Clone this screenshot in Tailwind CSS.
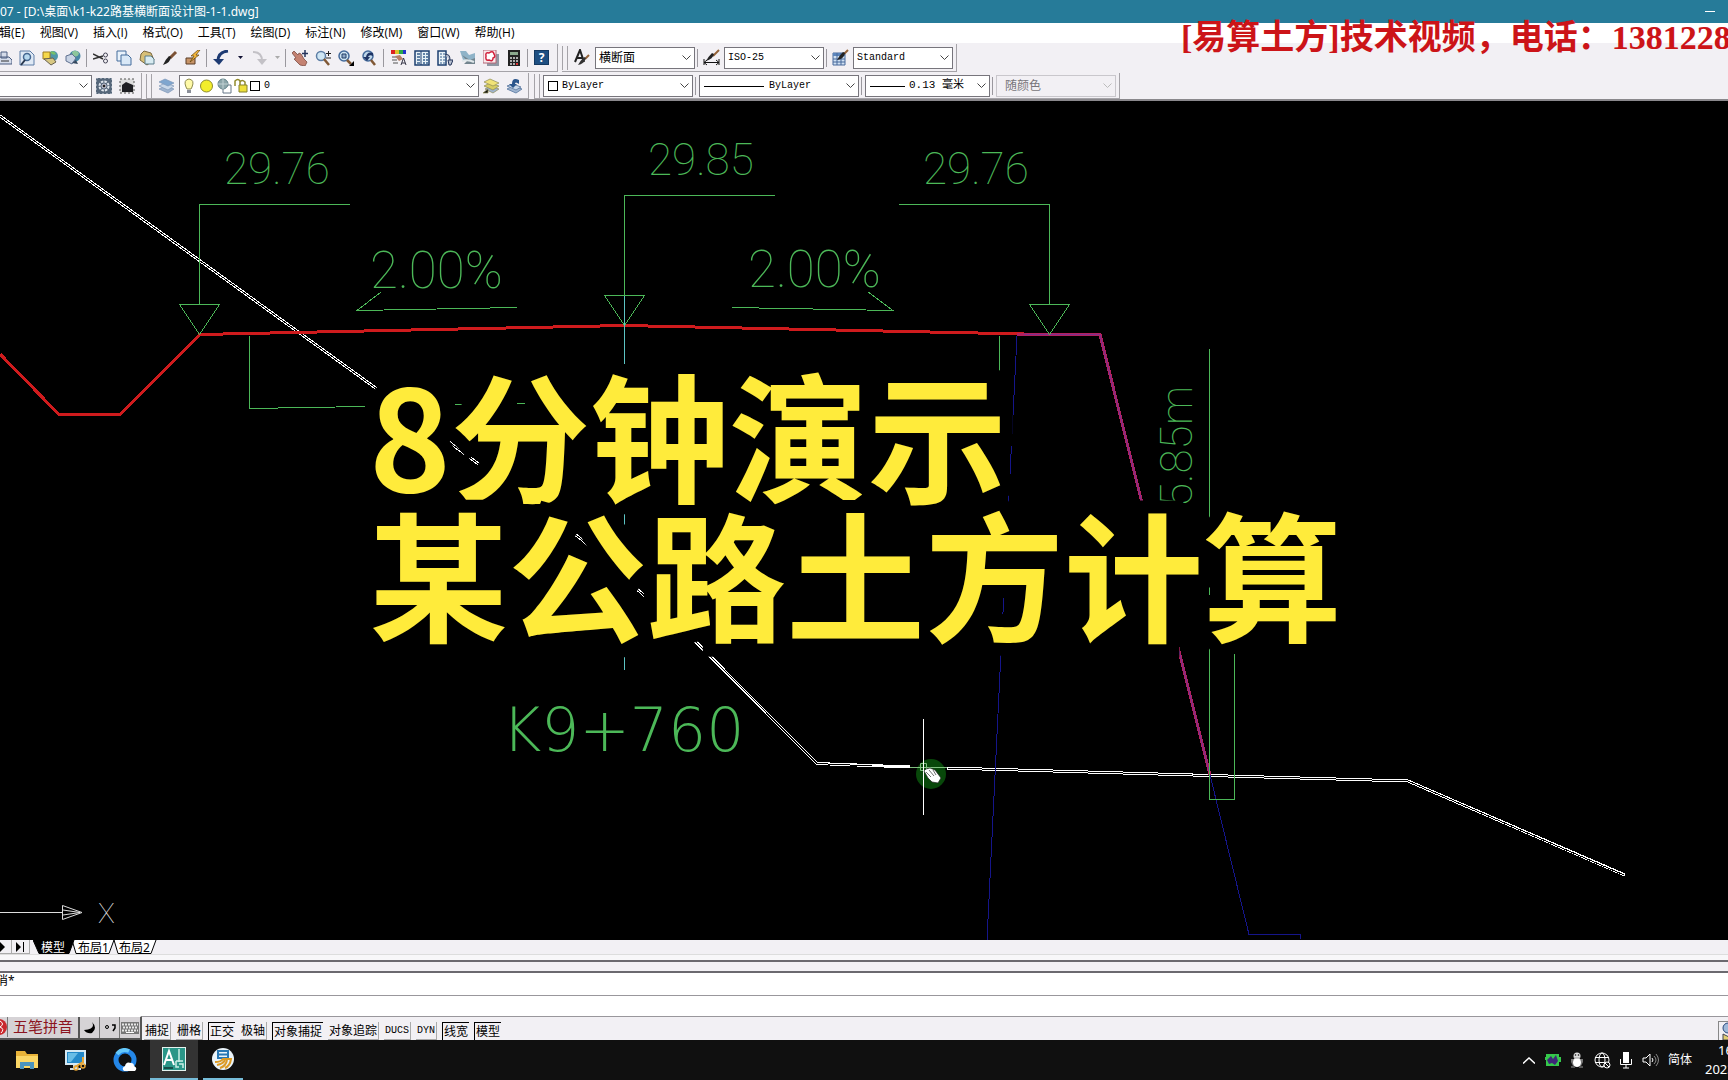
<!DOCTYPE html>
<html lang="zh-CN">
<head>
    <meta charset="UTF-8" />
    <meta name="viewport" content="width=device-width, initial-scale=1.0" />
    <title>k1-k22路基横断面设计图-1-1.dwg</title>
    <script src="https://cdn.jsdelivr.net/npm/@tailwindcss/browser@4"></script>
</head>
<body class="h-screen flex flex-col overflow-hidden bg-[#f2f0f4] text-xs text-black font-['Noto_Sans','Noto_Sans_CJK_SC',sans-serif]">
    <!-- Title bar -->
    <header class="h-[23px] shrink-0 flex items-center justify-between bg-[#267b99] text-white whitespace-nowrap">
        <span>07 - [D:\桌面\k1-k22路基横断面设计图-1-1.dwg]</span>
        <button aria-label="最小化" class="w-8 h-full flex items-center justify-center pr-1">
            <span class="w-[10px] h-px bg-white"></span>
        </button>
    </header>

    <!-- Menu -->
    <nav class="h-5 shrink-0 flex items-center gap-[15px] bg-white whitespace-nowrap font-['Open_Sans','Noto_Sans_CJK_SC',sans-serif]">
        <button class="-ml-px">辑(E)</button>
        <button>视图(V)</button>
        <button>插入(I)</button>
        <button>格式(O)</button>
        <button>工具(T)</button>
        <button>绘图(D)</button>
        <button>标注(N)</button>
        <button>修改(M)</button>
        <button>窗口(W)</button>
        <button>帮助(H)</button>
    </nav>

    <!-- Toolbar, first row -->
    <div class="h-[30px] shrink-0 flex items-center">
        <div class="h-[28px] flex items-center border-r border-b border-[#a5a3a8] pr-1 -ml-2">
            <button aria-label="打印" class="w-[23px] flex justify-center"><svg width="16" height="16"><path d="M3 7h10l3 3v4H3zM5 2h6v6H5z" fill="#d5dcea" stroke="#4a5c80"/><path d="M5 11h8" stroke="#333"/></svg></button>
            <button aria-label="打印预览" class="w-[23px] flex justify-center"><svg width="16" height="16"><path d="M1 1h10l4 4v10H1z" fill="#dfe9f5" stroke="#5d7ca6"/><circle cx="8" cy="7" r="3.500" fill="#b6d8ef" stroke="#436690" stroke-width="1.500"/><path d="M6 10l-4 5" stroke="#27364e" stroke-width="2"/></svg></button>
            <button aria-label="发布" class="w-[23px] flex justify-center"><svg width="16" height="16"><circle cx="11" cy="6" r="5" fill="#4f97a8"/><path d="M8 2q4-2 6 2-3 2-6-2" fill="#75c06a"/><path d="M1 2h7v7H1z" fill="#f6d84a" stroke="#9c7a22"/><path d="M2 9l9-1 3 4-5 3z" fill="#d8c882" stroke="#67604f"/></svg></button>
            <button aria-label="三维 DWF" class="w-[23px] flex justify-center"><svg width="16" height="16"><circle cx="10" cy="6" r="5.500" fill="#4687a5"/><path d="M7 2q4-3 7 1-1 5-6 3z" fill="#8cc69b"/><path d="M1 6l6-2 4 4-4 6-6-3z" fill="#c8d3e4" stroke="#607190"/><path d="M7 13l4-3 2 4z" fill="#33475f"/></svg></button>
            <span class="w-[5px] flex justify-center"><i class="w-px h-[18px] bg-[#9a989e]"></i></span>
            <button aria-label="剪切" class="w-[23px] flex justify-center"><svg width="16" height="16" fill="none"><path d="M0 4l10 5M0 9l10-3" stroke="#333" stroke-width="1.500"/><circle cx="12.500" cy="5" r="2" stroke="#445"/><circle cx="12.500" cy="11" r="2" stroke="#445"/></svg></button>
            <button aria-label="复制" class="w-[23px] flex justify-center"><svg width="16" height="16"><path d="M1 1h9v10H1z" fill="#e9f2fb" stroke="#446d9c"/><path d="M5 5h7l3 3v7H5z" fill="#d9e8f7" stroke="#446d9c"/></svg></button>
            <button aria-label="粘贴" class="w-[23px] flex justify-center"><svg width="16" height="16"><path d="M5 1l7 2 3 7-7 5-7-5 1-6z" fill="#d7bf77" stroke="#7a6840"/><path d="M6 6h6l3 3v5H6z" fill="#d8ebf1" stroke="#5b7d8b"/></svg></button>
            <button aria-label="特性匹配" class="w-[23px] flex justify-center"><svg width="16" height="16"><path d="M14 2L8 8" stroke="#7c5235" stroke-width="3"/><path d="M9 7q0 5-8 8 2-5 6-9z" fill="#222"/></svg></button>
            <button aria-label="块编辑器" class="w-[23px] flex justify-center"><svg width="16" height="16"><path d="M1 8h9v6H1z" fill="#c79468" stroke="#5b3d27"/><path d="M13 0L6 6h3l-4 6 9-7h-3l4-5z" fill="#f4b63a" stroke="#5d410c" stroke-width=".7"/></svg></button>
            <span class="w-[5px] flex justify-center"><i class="w-px h-[18px] bg-[#9a989e]"></i></span>
            <button aria-label="放弃" class="w-[23px] flex justify-center"><svg width="16" height="16"><path d="M15 1Q5 2 5 11" fill="none" stroke="#1d3a72" stroke-width="3"/><path d="M0 9h11l-5 6z" fill="#1d3a72"/></svg></button>
            <button aria-label="放弃列表" class="w-4 flex justify-center"><svg width="5" height="3"><path d="M0 0h5L2.500 3z" fill="#113"/></svg></button>
            <button aria-label="重做" class="w-[23px] flex justify-center"><svg width="16" height="16"><path d="M1 2Q10 2 10 11" fill="none" stroke="#c3c1c6" stroke-width="2"/><path d="M5 9h10l-5 6z" fill="#c3c1c6"/></svg></button>
            <button aria-label="重做列表" class="w-3 flex justify-center"><svg width="5" height="3"><path d="M0 0h5L2.500 3z" fill="#aaa"/></svg></button>
            <span class="w-[5px] flex justify-center"><i class="w-px h-[18px] bg-[#9a989e]"></i></span>
            <button aria-label="平移" class="w-[23px] flex justify-center"><svg width="16" height="16"><path d="M0 3l2-2 4 4 1-2 2 1 3 5 3 3-2 4-5-1-6-6 2-1z" fill="#c48272" stroke="#7e4c44" stroke-width=".8"/><path d="M13 0v7M10 3.500h6" stroke="#25345c" stroke-width="1.500"/></svg></button>
            <button aria-label="实时缩放" class="w-[23px] flex justify-center"><svg width="16" height="16"><circle cx="6" cy="6" r="4.500" fill="#cfe6f4" stroke="#5d7ea5" stroke-width="1.500"/><path d="M9 9l5 6" stroke="#805835" stroke-width="2.500"/><path d="M13.500 1v5M11 3.500h5M11 8h5" stroke="#222"/></svg></button>
            <button aria-label="窗口缩放" class="w-[23px] flex justify-center"><svg width="16" height="16"><circle cx="6" cy="6" r="5" fill="#cfe6f4" stroke="#446a9b" stroke-width="1.500"/><path d="M4 4h4v4H4z" fill="#8ba6c6" stroke="#223e68"/><path d="M9 10l4 4" stroke="#805835" stroke-width="2.500"/><path d="M16 11v5h-5z"/></svg></button>
            <button aria-label="缩放上一个" class="w-[23px] flex justify-center"><svg width="16" height="16"><circle cx="7" cy="6" r="5" fill="#bfd7ea" stroke="#446a9b" stroke-width="1.500"/><path d="M12 3Q6 1 5 7H2l4 4 3-4H7q1-3 5-1z" fill="#1f3566"/><path d="M10 10l4 5" stroke="#805835" stroke-width="2.500"/></svg></button>
            <span class="w-[7px] flex justify-center"><i class="w-px h-[18px] bg-[#9a989e]"></i></span>
            <button aria-label="特性" class="w-[23px] flex justify-center"><svg width="16" height="16"><path d="M0 0h4v4H0z" fill="#d22"/><path d="M4 0h4v4H4z" fill="#dcc52c"/><path d="M8 0h4v4H8z" fill="#2aa84b"/><path d="M12 0h3v4h-3z" fill="#23c"/><path d="M1 7h7M1 10h5M2 13h5" stroke="#555"/><path d="M4 6l5-1 3 4-4 2z" fill="#b77f66"/><path d="M10 15l2.500-7 2.500 7M11 13h3" stroke="#334" fill="none"/></svg></button>
            <button aria-label="设计中心" class="w-[23px] flex justify-center"><svg width="16" height="16"><path d="M1 1h14v14H1z" fill="#e9f2f7" stroke="#1d3f70" stroke-width="1.500"/><path d="M7 1v14" stroke="#1d3f70"/><path d="M3 4h3M3 7h3M3 10h3M3 13h3M9 4h2M12 4h2M9 7h2M12 7h2M9 10h2M12 10h2M9 13h2M12 13h2" stroke="#37608f" stroke-width="1.500"/></svg></button>
            <button aria-label="工具选项板" class="w-[23px] flex justify-center"><svg width="16" height="16"><path d="M1 1h8v14H1z" fill="#e9f2f7" stroke="#1d3f70" stroke-width="1.500"/><path d="M3 4h2M6 4h2M3 7h2M6 7h2M3 10h2M6 10h2M3 13h2M6 13h2" stroke="#37608f"/><path d="M8 5q5-2 5 5M11 10h5l-2 5h-2z" fill="#b6bfd0" stroke="#223258"/></svg></button>
            <button aria-label="图纸集" class="w-[23px] flex justify-center"><svg width="16" height="16"><path d="M0 1h6l3 4 6-2v7H3z" fill="#8fb3c8"/><path d="M2 5l8 5 5-2v6H4l3-3z" fill="#72848e"/><path d="M2 11q6-2 12 1" stroke="#dfe7ea" fill="none" stroke-width="2"/></svg></button>
            <button aria-label="标记集" class="w-[23px] flex justify-center"><svg width="16" height="16"><path d="M4 4h12v12H4z" fill="#9098a4"/><path d="M0 0h13v13H0z" fill="#f8e9ec" stroke="#b46574"/><path d="M3 6q-1-4 3-3 4-3 5 1 2 3-1 4 0 4-4 2-4 1-3-4z" fill="#fff" stroke="#d2203c" stroke-width="1.500"/></svg></button>
            <button aria-label="计算器" class="w-[23px] flex justify-center"><svg width="16" height="16"><path d="M2 0h12v16H2z" fill="#222"/><path d="M4 2h8v3H4z" fill="#8ba98d"/><path d="M4 8h8M4 11h8M4 14h8" stroke="#ddd" stroke-width="1.500" stroke-dasharray="2 1"/><path d="M10 13h2v2h-2z" fill="#d33"/></svg></button>
            <span class="w-[5px] flex justify-center"><i class="w-px h-[18px] bg-[#9a989e]"></i></span>
            <button aria-label="帮助" class="w-[23px] flex justify-center"><span class="w-[15px] h-[15px] bg-[#1e4f82] border border-[#143961] text-white font-bold leading-[14px] text-center">?</span></button>
        </div>

        <div class="h-[28px] flex items-center border-r border-b border-[#a5a3a8] pr-[3px] ml-1">
            <span class="w-[6px] h-6 border-x border-[#a5a3a8]"></span>
            <label for="textStyle" aria-label="文字样式" class="w-[27px] flex justify-center"><svg width="17" height="17"><path d="M2 13L7 1l4 12M4 9h6" fill="none" stroke="#222" stroke-width="2"/><path d="M16 6l-4 4" stroke="#946238" stroke-width="2"/><path d="M13 9q-2 6-8 7 2-4 6-8z" fill="#333"/></svg></label>
            <span class="relative w-[100px]">
                <select id="textStyle" class="appearance-none w-full h-[22px] pl-[3px] border border-[#77757c] bg-white"><option>横断面</option></select>
                <svg class="absolute right-1 top-2 pointer-events-none" width="9" height="6" fill="none" stroke="#444"><path d="M.5.5l4 4 4-4"/></svg>
            </span>
            <i class="w-px h-[18px] bg-[#9a989e] ml-[2px]"></i>
            <label for="dimStyle" aria-label="标注样式" class="w-[26px] flex justify-center"><svg width="17" height="17"><path d="M16 1l-6 6" stroke="#946238" stroke-width="2"/><path d="M11 5q-1 5-8 7 2-4 6-8z" fill="#222"/><path d="M1 10v6M16 10v6M1 13.500h15M4 11l-3 2.500L4 16M13 11l3 2.500-3 2.500" stroke="#111" fill="none"/></svg></label>
            <span class="relative w-[100px]">
                <select id="dimStyle" class="appearance-none w-full h-[22px] pl-[3px] border border-[#77757c] bg-white text-[10px] font-['Liberation_Mono',monospace]"><option>ISO-25</option></select>
                <svg class="absolute right-1 top-2 pointer-events-none" width="9" height="6" fill="none" stroke="#444"><path d="M.5.5l4 4 4-4"/></svg>
            </span>
            <i class="w-px h-[18px] bg-[#9a989e] ml-[2px]"></i>
            <label for="tableStyle" aria-label="表格样式" class="w-[26px] flex justify-center"><svg width="17" height="17"><path d="M1 4h12v12H1z" fill="#cfe0f2" stroke="#46699b"/><path d="M1 4h12v3H1z" fill="#5c86bd"/><path d="M1 10h12M1 13h12M5 4v12M9 4v12" stroke="#46699b"/><path d="M16 1l-4 4" stroke="#946238" stroke-width="2"/><path d="M13 4q-1 6-8 7 2-4 6-8z" fill="#222"/></svg></label>
            <span class="relative w-[100px]">
                <select id="tableStyle" class="appearance-none w-full h-[22px] pl-[3px] border border-[#77757c] bg-white text-[10px] font-['Liberation_Mono',monospace]"><option>Standard</option></select>
                <svg class="absolute right-1 top-2 pointer-events-none" width="9" height="6" fill="none" stroke="#444"><path d="M.5.5l4 4 4-4"/></svg>
            </span>
        </div>
    </div>

    <!-- Toolbar, second row -->
    <div class="h-[28px] shrink-0 flex items-center border-b-2 border-[#8a888c]">
        <div class="h-[26px] flex items-center border-r border-b border-[#a5a3a8] pr-[3px]">
            <span class="relative w-[92px]">
                <select aria-label="工作空间" class="appearance-none w-full h-[22px] border border-l-0 border-[#77757c] bg-white"><option></option></select>
                <svg class="absolute right-1 top-2 pointer-events-none" width="9" height="6" fill="none" stroke="#444"><path d="M.5.5l4 4 4-4"/></svg>
            </span>
            <button aria-label="工作空间设置" class="w-[23px] flex justify-center"><svg width="16" height="16"><path d="M0 0h16v16H0z" fill="#56677a"/><circle cx="8" cy="8" r="4.500" fill="none" stroke="#e1e7ee" stroke-width="2" stroke-dasharray="2.500 1"/><circle cx="8" cy="8" r="2" fill="#222" stroke="#dde"/><path d="M0 0h16v16H0z" fill="none" stroke="#cdd3da" stroke-dasharray="2 2"/></svg></button>
            <button aria-label="我的工作空间" class="w-[23px] flex justify-center"><svg width="16" height="16"><path d="M1 1h14v14H1z" fill="#ddd" stroke="#555" stroke-dasharray="2 2"/><path d="M3 7l4-3 7 3v7H3z" fill="#1e1e22"/></svg></button>
        </div>
        <div class="h-[26px] flex items-center border-r border-b border-[#a5a3a8] pr-[3px] ml-1">
            <span class="w-[6px] h-6 border-x border-[#a5a3a8]"></span>
            <button aria-label="图层特性管理器" class="w-[27px] flex justify-center"><svg width="16" height="16" stroke="#7d96b8" stroke-width=".7"><path d="M1 11l6-3 9 3-6 4z" fill="#9fb4cf"/><path d="M1 8l6-3 9 3-6 4z" fill="#c9d8e9"/><path d="M1 4l6-3 9 4-6 3z" fill="#7fa6cf"/></svg></button>
            <span class="relative w-[300px]">
                <select aria-label="图层" class="appearance-none w-full h-[22px] pl-[84px] border border-[#77757c] bg-white text-[10px] font-['Liberation_Mono',monospace]"><option>0</option></select>
                <span class="absolute left-[3px] top-[3px] flex items-center gap-[2px] pointer-events-none">
                    <svg width="15" height="16"><path d="M4 9Q1 2 7 1q6 1 3 8l-1 2H5z" fill="#fffaa8" stroke="#8d8a4c"/><path d="M5 12h4v3H5z" fill="#8b8f99"/></svg>
                    <svg width="15" height="16"><circle cx="7.500" cy="8" r="6" fill="#f3ee2b" stroke="#8d8a2c"/></svg>
                    <svg width="16" height="16"><path d="M7 7h8v8H7z" fill="#fff" stroke="#678"/><circle cx="7" cy="6" r="5" fill="#8da6aa" stroke="#62828a"/><path d="M7 1v10M2 6h10" stroke="#c1d1d4"/></svg>
                    <svg width="14" height="16"><path d="M1 8V3q3-3 5 0v4M6 7V4q2-3 5 0v3" fill="none" stroke="#918a2c" stroke-width="1.500"/><path d="M5 7h8v7H5z" fill="#eee03a" stroke="#85802c"/></svg>
                    <i class="w-[10px] h-[10px] border border-black bg-white"></i>
                </span>
                <svg class="absolute right-1 top-2 pointer-events-none" width="9" height="6" fill="none" stroke="#444"><path d="M.5.5l4 4 4-4"/></svg>
            </span>
            <button aria-label="将对象的图层置为当前" class="w-[23px] flex justify-center"><svg width="16" height="16" stroke="#8c8a55" stroke-width=".7"><path d="M2 11l6-3 8 3-6 4z" fill="#9fb4cf"/><path d="M1 8l6-3 9 3-6 4z" fill="#d7cd62"/><path d="M1 4l6-3 9 4-6 3z" fill="#f1e377"/><path d="M0 15l5-4v4z" fill="#111"/></svg></button>
            <button aria-label="上一个图层" class="w-[23px] flex justify-center"><svg width="16" height="16"><path d="M1 11l6-3 9 3-6 4z" fill="#9fb4cf" stroke="#6a86ab"/><path d="M1 8l6-2 8 3-5 3z" fill="#c9d8e9" stroke="#6a86ab"/><path d="M13 2Q6-1 6 6H3l4 4 4-4H9q0-3 4 0z" fill="#2b568c"/></svg></button>
        </div>
        <div class="h-[26px] flex items-center border-r border-b border-[#a5a3a8] pr-[3px] ml-[5px]">
            <span class="w-[6px] h-6 border-x border-[#a5a3a8] mr-[3px]"></span>
            <span class="relative w-[150px]">
                <select aria-label="颜色" class="appearance-none w-full h-[22px] pl-[18px] border border-[#77757c] bg-white text-[10px] font-['Liberation_Mono',monospace]"><option>ByLayer</option></select>
                <i class="absolute left-[5px] top-[6px] w-[10px] h-[10px] border border-black pointer-events-none"></i>
                <svg class="absolute right-1 top-2 pointer-events-none" width="9" height="6" fill="none" stroke="#444"><path d="M.5.5l4 4 4-4"/></svg>
            </span>
            <i class="w-px h-[18px] bg-[#9a989e] ml-[2px] mr-[3px]"></i>
            <span class="relative w-40">
                <select aria-label="线型" class="appearance-none w-full h-[22px] pl-[69px] border border-[#77757c] bg-white text-[10px] font-['Liberation_Mono',monospace]"><option>ByLayer</option></select>
                <i class="absolute left-[5px] top-[11px] w-[60px] h-px bg-black pointer-events-none"></i>
                <svg class="absolute right-1 top-2 pointer-events-none" width="9" height="6" fill="none" stroke="#444"><path d="M.5.5l4 4 4-4"/></svg>
            </span>
            <i class="w-px h-[18px] bg-[#9a989e] ml-[2px] mr-[3px]"></i>
            <span class="relative w-[125px]">
                <select aria-label="线宽" class="appearance-none w-full h-[22px] pl-[43px] border border-[#77757c] bg-white text-[11px] font-['Liberation_Mono','Noto_Sans_CJK_SC',monospace]"><option>0.13 毫米</option></select>
                <i class="absolute left-[5px] top-[11px] w-[35px] h-px bg-black pointer-events-none"></i>
                <svg class="absolute right-1 top-2 pointer-events-none" width="9" height="6" fill="none" stroke="#444"><path d="M.5.5l4 4 4-4"/></svg>
            </span>
            <i class="w-px h-[18px] bg-[#9a989e] ml-[2px] mr-[3px]"></i>
            <span class="relative w-[120px]">
                <select aria-label="打印样式" disabled class="appearance-none w-full h-[22px] pl-2 border border-[#c9c7cc] bg-[#f2f0f4] text-[#77757a] opacity-100"><option>随颜色</option></select>
                <svg class="absolute right-1 top-2 pointer-events-none" width="9" height="6" fill="none" stroke="#bbb"><path d="M.5.5l4 4 4-4"/></svg>
            </span>
        </div>
    </div>

    <!-- Drawing area -->
    <main class="relative flex-1 min-h-0 overflow-hidden bg-black">
        <svg class="absolute inset-0 w-full h-full" fill="none">
            <g transform="translate(0 -101)">
                <g shape-rendering="crispEdges">
                    <!-- ground line -->
                    <path d="M0 116L377 389L480 465L580 538L696 642L817 763.500L910 767M947 768L1210 775.500L1408 781L1625 875" stroke="#fff" stroke-width="3"/>
                    <path d="M0 116L377 389L480 465L580 538L696 642L817 763.500L872 766M947 768L1210 775.500L1408 781L1624 875" stroke="#000"/>
                    <!-- road surface -->
                    <path d="M0 354L59 414.500H120L200 334.500L624 325.500L1024 334" stroke="#cf1b1d" stroke-width="3"/>
                    <path d="M1017 334.500H1100L1210 775" stroke="#b3205e" stroke-width="3"/>
                    <path d="M1024 334.500H1100L1210 775" stroke="#7d2f8e"/>
                    <path d="M1017 336L1001 652L987 940M1210 775L1249 934.500H1300V939" stroke="#15158a"/>
                    <!-- elevation marks and slopes -->
                    <g stroke="#4cb858">
                        <path d="M350 204.500H199.500V304.500M179.500 304.500H219.500L199.500 334.500Z"/>
                        <path d="M775 195.500H624.500V295.500M604.500 295.500H644.500L624.500 325.500Z"/>
                        <path d="M899 204.500H1049.500V304.500M1029.500 304.500H1069.500L1049.500 334.500Z"/>
                        <path d="M381 292L357 310.500L517 307.500M868 292L893 310.500L732 307.500"/>
                        <path d="M249.500 336V408.500L365 406.500M455 404.500H462M517 403.500H525M578 402.500H583M999.500 336V371"/>
                        <path d="M1209.500 349V799.500H1234.500V654"/>
                    </g>
                    <path d="M624.500 296V364M624.500 512V532M624.500 585V592M624.500 653V670" stroke="#5cc4c4"/>
                </g>
                <g fill="#4cb858" class="font-['Roboto',sans-serif] font-thin">
                    <g font-size="44">
                        <text x="224" y="184">29.76</text>
                        <text x="648" y="175">29.85</text>
                        <text x="923" y="184">29.76</text>
                        <text transform="translate(1192 507) rotate(-90)">5.85m</text>
                    </g>
                    <text x="370" y="288" font-size="51">2.00%</text>
                    <text x="748" y="287" font-size="51">2.00%</text>
                </g>
                <text x="502" y="751" font-size="60" fill="#4cb858" class="font-['DejaVu_Sans',sans-serif] font-extralight">K9+760</text>
                <!-- UCS axis -->
                <path d="M0 912.500H62M62.500 905.500V919.500L82 912.500ZM63 910L80 912.500L63 915" stroke="#ddd"/>
                <text x="98" y="923" font-size="28" fill="#ddd" class="font-['Roboto',sans-serif] font-thin">X</text>
                <!-- cursor -->
                <circle cx="931" cy="774" r="15" fill="#08480a"/>
                <path d="M910 767.500H947M920.500 763.500H926.500V770.500H920.500Z" stroke="#7fbf7f"/>
                <path d="M923.500 719V815" stroke="#fff"/>
                <path d="M924 771l2-2 4-1 5 2 3 4 3 4-3 5-6-1-4-4z" fill="#fff" stroke="#222" stroke-width=".7"/>
                <path d="M926 772l5 5M929 770l5 6M933 770l3 5" stroke="#333" stroke-width=".7"/>
            </g>
        </svg>
        <h1 class="absolute left-[369px] top-[261px] text-[139px] leading-[139px] font-bold text-[#ffeb3b] whitespace-nowrap font-['Noto_Sans_CJK_SC',sans-serif] [-webkit-text-stroke:26px_black] [paint-order:stroke_fill]">8分钟演示<br>某公路土方计算</h1>
    </main>

    <!-- Layout tabs -->
    <div class="h-[14px] shrink-0 flex">
        <button aria-label="下一个" class="w-3 flex items-center border-r border-b border-[#aaa]"><svg width="6" height="10"><path d="M0 0l5 5-5 5z"/></svg></button>
        <button aria-label="最后一个" class="w-[18px] flex items-center justify-center border-r border-b border-[#aaa]"><svg width="9" height="10"><path d="M0 0l5 5-5 5zM7 0h1v10H7z"/></svg></button>
        <div class="relative ml-[3px] flex text-xs leading-[13px]">
            <svg class="absolute inset-0" width="126" height="14" fill="#fff" stroke="#000"><path d="M39 0l4 13.500h33L81 0M81 0l4 13.500h33L123 0"/><path d="M0 0l6 13.500h30L41 0z" fill="#000"/></svg>
            <button class="relative w-10 text-white">模型</button>
            <button class="relative w-[41px]">布局1</button>
            <button class="relative w-[41px]">布局2</button>
        </div>
    </div>

    <!-- Command line -->
    <div class="h-[78px] shrink-0 flex flex-col">
        <div class="h-[6px] border-t border-[#ddd] bg-[#f8f7f9]"></div>
        <div class="h-[13px] border-y-2 border-[#6b696f] bg-[#f2f0f4]"></div>
        <div class="h-[23px] bg-white border-b border-[#99979c] leading-4 -indent-1">消*</div>
        <input aria-label="命令行" class="h-[21px] w-full bg-white border-b border-[#99979c] outline-none">
        <div class="h-[15px]"></div>
    </div>

    <!-- Status bar, overlaps the end of the command block -->
    <footer class="h-6 -mt-[16px] shrink-0 flex items-end whitespace-nowrap relative">
        <div class="w-[142px] h-full flex bg-[#d6d3d6] border-r-2 border-b-2 border-[#555] border-t border-t-white text-[#8c1420]">
            <svg width="8" height="20" class="border-r border-[#777]"><circle cx="-1" cy="10" r="8" fill="#c9282d"/><path d="M0 4q5 3 0 6 5 2 1 6" fill="none" stroke="#fff"/></svg>
            <button class="w-[72px] pb-1 text-[15px] leading-4 border-r-2 border-[#555]">五笔拼音</button>
            <button aria-label="半角" class="w-5 flex items-center justify-center border-r border-[#777]"><svg width="12" height="12"><path d="M8 0q4 7-8 8 3 4 8 3 6-5 0-11z" fill="#000"/></svg></button>
            <button aria-label="标点" class="w-5 flex items-center justify-center border-r border-[#777]"><svg width="12" height="10"><circle cx="3" cy="4" r="1.500" fill="none" stroke="#000"/><path d="M8 2h3v3l-2 3" fill="none" stroke="#000" stroke-width="1.500"/></svg></button>
            <button aria-label="软键盘" class="w-5 flex items-center justify-center"><svg width="18" height="12"><path d="M0 0h18v12H0z" fill="#777"/><path d="M1 2.500h16M2 5.500h15M1 8.500h16" stroke="#e8e8e8" stroke-width="2" stroke-dasharray="2 1"/><path d="M5 10.500h8" stroke="#fff"/></svg></button>
        </div>
        <div class="flex gap-[5px] pl-[2px] leading-[17px]">
            <button class="h-[18px] w-[27px] border-r border-b border-[#aaa]">捕捉</button>
            <button class="h-[18px] w-[27px] border-r border-b border-[#aaa]">栅格</button>
            <button class="h-[18px] w-[27px] border-l border-t border-black">正交</button>
            <button class="h-[18px] w-[27px] border-r border-b border-[#aaa]">极轴</button>
            <button class="h-[18px] w-[51px] border-l border-t border-black">对象捕捉</button>
            <button class="h-[18px] w-[51px] border-r border-b border-[#aaa]">对象追踪</button>
            <button class="h-[18px] w-[27px] border-r border-b border-[#aaa] text-[10px] font-['Liberation_Mono',monospace]">DUCS</button>
            <button class="h-[18px] w-[21px] border-r border-b border-[#aaa] text-[10px] font-['Liberation_Mono',monospace]">DYN</button>
            <button class="h-[18px] w-[27px] border-l border-t border-black">线宽</button>
            <button class="h-[18px] w-[27px] border-l border-t border-black">模型</button>
        </div>
        <svg class="ml-auto border-l border-t border-[#888]" width="10" height="19"><circle cx="9" cy="6" r="5" fill="#9fb9da" stroke="#29487c"/><path d="M4 12l6 3v3H4z" fill="#e3cf71" stroke="#445"/></svg>
    </footer>

    <!-- Taskbar -->
    <div class="h-10 shrink-0 flex items-stretch bg-[#101010] text-white whitespace-nowrap overflow-hidden relative">
        <button aria-label="文件资源管理器" class="w-[54px] flex items-center justify-center"><svg width="22" height="20"><path d="M0 1h9l2 3h11v14H0z" fill="#e8b339"/><path d="M0 6h22v12H0z" fill="#fbd766"/><path d="M4 12h14v7h-4v-3H8v3H4z" fill="#4b94bd"/></svg></button>
        <button aria-label="远程桌面" class="w-11 flex items-center justify-center"><svg width="22" height="22"><path d="M0 1h21v15H0z" fill="#d5e9f3"/><path d="M2 3h17v11H2z" fill="#2389c9"/><path d="M3 4h10l-7 9H3z" fill="#68bde6"/><path d="M8 16h5v3h3v2H5v-2h3z" fill="#cddde5"/><path d="M18 8v6M10 18l8-5" stroke="#e7a534" stroke-width="2"/><circle cx="11" cy="19" r="2" fill="none" stroke="#e7a534" stroke-width="1.500"/><circle cx="18" cy="17" r="2" fill="none" stroke="#e7a534" stroke-width="1.500"/></svg></button>
        <button aria-label="QQ浏览器" class="w-[52px] pl-[2px] flex items-center justify-center"><svg width="24" height="24"><circle cx="12" cy="12" r="9" fill="none" stroke="#2487e8" stroke-width="5"/><path d="M4 6q5-6 12-3" stroke="#65c8fa" stroke-width="4" fill="none"/><path d="M11 23q-3-3 1-5 1-5 6-3 3 0 3 3 4 2 1 5z" fill="#fff"/></svg></button>
        <button aria-label="AutoCAD" class="w-12 flex items-center justify-center bg-[#333] border-b-2 border-[#76bcd8]"><svg width="24" height="24"><path d="M0 0h24v24H0z" fill="#e5f2ef"/><path d="M1 1h22v22H1z" fill="#2a9688"/><path d="M2 18L7 4l5 14M4 13h6" fill="none" stroke="#fff" stroke-width="2"/><path d="M17 2v13M14 14h7M14 14v6h3M17 17h4v4" fill="none" stroke="#c9eee5" stroke-width="1.500"/><path d="M2 21h9" stroke="#164f49" stroke-width="2"/></svg></button>
        <button aria-label="易算土方" class="ml-[5px] w-10 flex items-center justify-center border-b-2 border-[#76bcd8]"><svg width="22" height="22"><circle cx="11" cy="11" r="11" fill="#eaf4fa"/><path d="M6 3h10v7H6zM6 6.500h10" fill="none" stroke="#2878b5" stroke-width="2"/><path d="M3 14q6 0 8-3h8q-1 7-6 9M5 17q6-1 8-5M8 20q6-2 7-8" stroke="#dc9a24" stroke-width="2" fill="none"/></svg></button>

        <div class="ml-auto flex items-center">
            <button aria-label="显示隐藏的图标" class="w-[26px] flex justify-center"><svg width="12" height="7" fill="none" stroke="#fff" stroke-width="1.500"><path d="M0 6.500l6-5.500 6 5.500"/></svg></button>
            <button aria-label="显卡" class="w-[22px] flex justify-center"><svg width="16" height="14"><path d="M1 1h13v12H1z" fill="#35c94b"/><path d="M0 4h2v3H0zM14 4h2v5h-2z" fill="#35c94b"/><path d="M2 7l4-4 2 3 3-4 2 6-3 4-3-2-3 1z" fill="#3e2778"/></svg></button>
            <button aria-label="QQ" class="w-[26px] flex justify-center"><svg width="14" height="16"><circle cx="7" cy="4" r="3.500" fill="#ddd"/><path d="M1 7h12v3l-2 4H3l-2-4z" fill="#777"/><ellipse cx="7" cy="10.500" rx="4" ry="4.500" fill="#fff"/><path d="M4 6h6M1 15h4M9 15h4" stroke="#999"/><circle cx="5.500" cy="3" r=".8" fill="#111"/><circle cx="8.500" cy="3" r=".8" fill="#111"/></svg></button>
            <button aria-label="网络" class="w-6 flex justify-center"><svg width="17" height="17" fill="none" stroke="#fff"><circle cx="8" cy="8" r="7"/><ellipse cx="8" cy="8" rx="3" ry="7"/><path d="M1 5.500h14M1 10.500h14"/><circle cx="13" cy="13" r="3" fill="#101010"/><path d="M11 11l4 4"/></svg></button>
            <button aria-label="麦克风" class="w-6 flex justify-center"><svg width="12" height="17"><path d="M3 0h6v11H3z" fill="#fff"/><path d="M.5 7v5.500h11V7M6 13v3M3 16h6" stroke="#fff" fill="none"/></svg></button>
            <button aria-label="音量" class="w-6 flex justify-center"><svg width="17" height="14" fill="none" stroke="#fff"><path d="M1 5h3l4-4v12L4 9H1z"/><path d="M10 5q2 2 0 4"/><path d="M12 3q4 4 0 8M14 1q5 6 0 12" stroke="#888"/></svg></button>
            <button class="w-9 text-center">简体</button>
            <div class="w-[30px] h-[38px] overflow-hidden text-[13px] leading-[19px]">
                <div class="pl-5">16</div>
                <div class="pl-[7px]">2023</div>
            </div>
        </div>
    </div>

    <!-- Banner running over the window -->
    <p class="absolute left-[1181px] right-0 top-[18px] overflow-hidden whitespace-nowrap text-[34px] leading-[40px] font-bold text-[#cc1418] font-['Liberation_Serif','Noto_Sans_CJK_SC',serif]">[易算土方]技术视频，电话：1381228</p>
</body>
</html>
